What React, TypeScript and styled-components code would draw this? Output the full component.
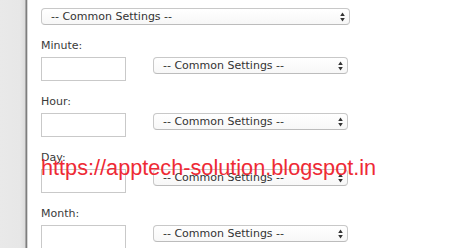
import React from "react";
import styled, { createGlobalStyle } from "styled-components";

const Global = createGlobalStyle`
  html, body, #root { height: 100%; }
  body { margin: 0; background: #fff; overflow: hidden; }
`;

const Page = styled.div`
  position: relative;
  display: flex;
  height: 100%;
  font-family: "DejaVu Sans", Verdana, sans-serif;
  font-size: 11px;
  color: #333;
`;

const Sidebar = styled.div`
  width: 25px;
  flex: none;
  background: linear-gradient(to right, #e9e9e9 0%, #e7e7e7 80%, #dcdcdc 100%);
  border-right: 1px solid #a9a9a9;
  box-shadow: 1px 0 0 #7d7d7d, 2px 0 0 #d6d6d6;
`;

const Main = styled.div`
  flex: 1;
  padding: 8px 0 0 15px;
`;

const SelectBox = styled.div<{ $width: number }>`
  box-sizing: border-box;
  width: ${(p) => p.$width}px;
  height: 17px;
  display: flex;
  align-items: center;
  justify-content: space-between;
  padding: 0 4px 0 9px;
  border: 1px solid #c8c8c8;
  border-bottom-color: #bcbcbc;
  border-radius: 4px;
  background: linear-gradient(#ffffff, #f7f7f7);
  line-height: 15px;
  white-space: nowrap;
`;

const SelectText = styled.span`
  color: #333;
`;

const Arrows = styled.svg`
  width: 5px;
  height: 10px;
  flex: none;
`;

const TopSelect = styled.div`
  margin-bottom: 14px;
`;

const Field = styled.div`
  margin-bottom: 14px;
`;

const Label = styled.div`
  line-height: 14px;
  margin-bottom: 4px;
  color: #3a3a3a;
`;

const Row = styled.div`
  display: flex;
  align-items: flex-start;
  gap: 27px;
`;

const TextInput = styled.div`
  box-sizing: border-box;
  width: 85px;
  height: 24px;
  border: 1px solid #c9c9c9;
  background: #fff;
`;

const Watermark = styled.div`
  position: absolute;
  left: 41px;
  top: 157px;
  font-family: "Liberation Sans", Arial, sans-serif;
  font-size: 21.7px;
  line-height: 22px;
  color: #ee2a35;
  white-space: nowrap;
`;

const Select = ({ width }: { width: number }) => (
  <SelectBox $width={width}>
    <SelectText>-- Common Settings --</SelectText>
    <Arrows viewBox="0 0 5 10">
      <path d="M2.5 0.5 L4.8 4 L0.2 4 Z" fill="#333" />
      <path d="M2.5 9.5 L4.8 6 L0.2 6 Z" fill="#333" />
    </Arrows>
  </SelectBox>
);

const fields = ["Minute:", "Hour:", "Day:", "Month:"];

export default function App() {
  return (
    <>
      <Global />
      <Page>
        <Sidebar />
        <Main>
          <TopSelect>
            <Select width={309} />
          </TopSelect>
          {fields.map((f) => (
            <Field key={f}>
              <Label>{f}</Label>
              <Row>
                <TextInput />
                <Select width={195} />
              </Row>
            </Field>
          ))}
        </Main>
        <Watermark>https://apptech-solution.blogspot.in</Watermark>
      </Page>
    </>
  );
}
